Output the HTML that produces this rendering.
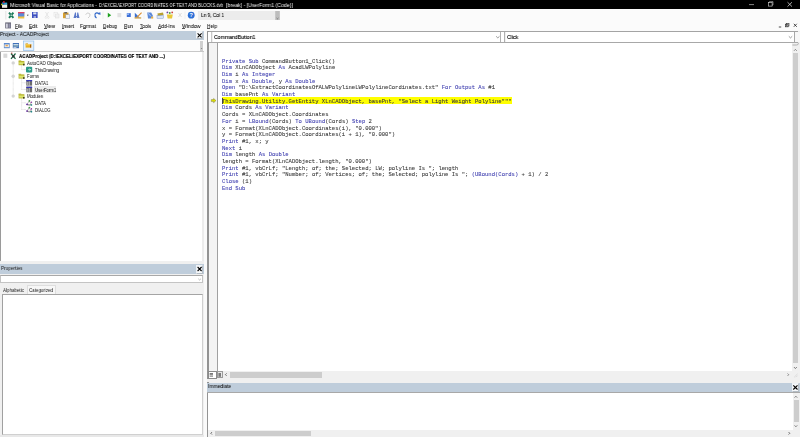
<!DOCTYPE html>
<html><head><meta charset="utf-8">
<style>
*{margin:0;padding:0;box-sizing:border-box}
html,body{width:800px;height:437px;overflow:hidden;background:#f0f0f0;position:relative;font-family:"Liberation Sans",sans-serif}
.a{position:absolute}
.t{position:absolute;white-space:pre;transform-origin:0 0;line-height:1;will-change:transform}
.cl{position:absolute;will-change:transform;left:222.2px;white-space:pre;font-family:"Liberation Mono",monospace;font-size:5.56px;-webkit-text-stroke:0.08px currentColor;line-height:6.67px;height:6.67px}
.cap{background:#bfcddb}
.xb{position:absolute;background:#f6f8fa;border:0.5px solid #eef2f6;border-right-color:#b4bcc4;border-bottom-color:#b4bcc4}
.sb{position:absolute;background:#f0f0f0}
.th{position:absolute;background:#cdcdcd}
</style></head><body>
<!-- title bar -->
<div class="a" style="left:0;top:0;width:800px;height:9.2px;background:#000"></div>
<svg class="a" style="left:0;top:0" width="800" height="10" viewBox="0 0 800 10">
  <rect x="2" y="4.3" width="5.2" height="3.5" fill="#f4f0e8"/>
  <rect x="2" y="2.6" width="5.2" height="1.9" fill="#30a8d0"/>
  <rect x="2" y="2.6" width="2.2" height="1.9" fill="#2060c0"/>
  <circle cx="3.9" cy="1.9" r="0.9" fill="#e02030"/>
  <circle cx="1.9" cy="4.4" r="0.9" fill="#b0c020"/>
  <line x1="749" y1="4.6" x2="754" y2="4.6" stroke="#ddd" stroke-width="0.6"/>
  <rect x="768.5" y="2.5" width="3.6" height="3.6" fill="none" stroke="#ddd" stroke-width="0.6"/>
  <path d="M769.5 2.5 V1.6 H773 V5 H772" fill="none" stroke="#ddd" stroke-width="0.5"/>
  <path d="M787.5 2.2 L792 6.6 M792 2.2 L787.5 6.6" stroke="#eee" stroke-width="0.7"/>
</svg>
<!-- toolbar + menu -->
<div class="a" style="left:0;top:9.2px;width:800px;height:21.8px;background:#fbfbfb"></div>
<svg class="a" style="left:0;top:9px" width="300" height="22" viewBox="0 9 300 22">
  <!-- grip -->
  <line x1="5.8" y1="11" x2="5.8" y2="19.5" stroke="#d0d0d0" stroke-width="0.6"/>
  <!-- excel icon -->
  <path d="M9 12.6 L13.4 17.8 M13.4 12.6 L9 17.8" stroke="#1a7a5a" stroke-width="1.9"/>
  <rect x="10.6" y="14.6" width="1.2" height="1.2" fill="#f8f8f8"/>
  <!-- form icon -->
  <rect x="18" y="12" width="6.3" height="6.5" fill="#f0c040"/>
  <rect x="18" y="12" width="6.3" height="4.5" fill="#5a8ad8"/>
  <rect x="18" y="12" width="6.3" height="1.3" fill="#e04060"/>
  <path d="M26.9 14.7 L28.7 14.7 L27.8 15.9Z" fill="#222"/>
  <!-- save -->
  <rect x="32" y="12" width="5.6" height="6" fill="#3d4fc0"/>
  <rect x="33.2" y="12.4" width="3.2" height="2" fill="#d8def0"/>
  <rect x="33.6" y="16" width="2.4" height="2" fill="#9aa5d8"/>
  <!-- cut grey -->
  <path d="M45.5 12 L48.5 17 M48.5 12 L45.5 17" stroke="#d8d8d8" stroke-width="0.6"/>
  <circle cx="45.8" cy="17.6" r="0.9" fill="none" stroke="#dadada" stroke-width="0.4"/>
  <circle cx="48.3" cy="17.6" r="0.9" fill="none" stroke="#dadada" stroke-width="0.4"/>
  <!-- copy grey -->
  <rect x="54" y="12.2" width="3.5" height="4" fill="none" stroke="#dcdcdc" stroke-width="0.5"/>
  <rect x="55.5" y="14" width="3.5" height="4" fill="#f0f0f0" stroke="#dcdcdc" stroke-width="0.5"/>
  <!-- paste -->
  <rect x="63" y="12.6" width="5.5" height="5.6" fill="#d8a030"/>
  <rect x="64.3" y="12" width="2.8" height="1.5" fill="#666"/>
  <rect x="65.8" y="14.8" width="4" height="3.6" fill="#eef2f8" stroke="#8098c0" stroke-width="0.4"/>
  <!-- find -->
  <path d="M73.5 18 L75 12.5 L76 12.5 L76.2 16 L77 16 L77.2 12.5 L78.2 12.5 L79.5 18 L77 18 L76.5 16.5 L76 18Z" fill="#5a78c8"/>
  <!-- undo grey -->
  <path d="M85.5 14.5 Q88 11.5 90 14 Q90.5 16.5 88 18" fill="none" stroke="#c8c8c8" stroke-width="0.9"/>
  <!-- redo -->
  <path d="M99.5 14.5 Q97 11.5 95 14 Q94.5 16.5 96.5 18" fill="none" stroke="#2f66c8" stroke-width="1.1"/>
  <path d="M98.2 13 L100.5 15 L100.3 12.3Z" fill="#2f66c8"/>
  <!-- sep -->
  <line x1="103" y1="11.5" x2="103" y2="19" stroke="#e0e0e0" stroke-width="0.5"/>
  <!-- run -->
  <path d="M107.8 12.8 L111.2 15.2 L107.8 17.6Z" fill="#1da01d"/>
  <!-- break grey -->
  <rect x="117.4" y="13" width="3.8" height="4.2" fill="#e2e2e2"/>
  <!-- reset -->
  <rect x="126.8" y="13.2" width="4" height="3.8" fill="#3c6fd8"/><rect x="127" y="13.4" width="2" height="1.6" fill="#8ab0f0"/>
  <!-- design mode -->
  <path d="M134.8 12.8 L134.8 17.6 L139.6 17.6Z" fill="#3a70d0"/>
  <rect x="134.6" y="17.4" width="6.6" height="1.1" fill="#c89020"/>
  <path d="M136.4 17 L141.2 12.2 L142 13 L137.2 17.8Z" fill="#e09030"/>
  <!-- sep -->
  <line x1="144" y1="11.5" x2="144" y2="19" stroke="#e4e4e4" stroke-width="0.5"/>
  <!-- project explorer -->
  <path d="M147.2 12.4 L151.2 12.4 L153 16 L151 18.6 L148 18.6Z" fill="#5a88d8"/>
  <path d="M148 13.2 L151 16.4" stroke="#e8f0ff" stroke-width="0.6"/>
  <rect x="151.2" y="16.6" width="2" height="2" fill="#e8b040"/>
  <!-- properties -->
  <path d="M157.4 13.6 L163 12.4 L163.6 15 L158 16.2Z" fill="#b8a030"/>
  <rect x="157" y="15.6" width="6.4" height="2.8" fill="#d8e4f4" stroke="#6a8cc8" stroke-width="0.4"/>
  <!-- object browser -->
  <path d="M166.8 14.4 L172.8 14.4 L172 18.6 L167.6 18.6Z" fill="#e8c838"/>
  <circle cx="167.4" cy="12.4" r="0.9" fill="#7040a0"/><circle cx="169.8" cy="13" r="0.9" fill="#40a040"/><circle cx="172.2" cy="12.4" r="0.9" fill="#d04040"/>
  <!-- toolbox grey -->
  <path d="M178.5 13 L181.5 17 M181.5 13 L178.5 17" stroke="#d8d8d8" stroke-width="0.8"/>
  <line x1="185" y1="11.5" x2="185" y2="19" stroke="#e0e0e0" stroke-width="0.5"/>
  <!-- help -->
  <circle cx="191.2" cy="15.2" r="3.4" fill="#2c6fd6"/>
  <text x="189.5" y="17.4" font-family="Liberation Sans" font-size="5.5" font-weight="700" fill="#fff">?</text>
  <!-- Ln Col box -->
  <rect x="198" y="11" width="82" height="9" fill="#ececec"/>
  <rect x="275.2" y="11" width="4.6" height="9" fill="#bdbdbd"/>
  <path d="M276.6 18 L277.5 18.8 L278.4 18" fill="none" stroke="#333" stroke-width="0.5"/>
  <!-- menu icon -->
  <rect x="5.2" y="22.4" width="5.8" height="6" fill="#6a6a7a"/>
  <rect x="6" y="23.6" width="1.8" height="4.2" fill="#d0d0dc"/>
  <rect x="8.5" y="23.6" width="1.9" height="4.2" fill="#9090a8"/>
</svg>
<!-- MDI child controls -->
<svg class="a" style="left:770px;top:21px" width="30" height="10" viewBox="770 21 30 10">
  <rect x="778.8" y="26.6" width="2.4" height="0.8" fill="#222"/>
  <rect x="785.5" y="24.2" width="2.6" height="2.6" fill="none" stroke="#333" stroke-width="0.7"/>
  <rect x="786.4" y="23.4" width="2.6" height="2.6" fill="none" stroke="#333" stroke-width="0.6"/>
  <path d="M793.8 23.8 L796.8 26.8 M796.8 23.8 L793.8 26.8" stroke="#222" stroke-width="0.8"/>
</svg>

<!-- ===== Project panel ===== -->
<div class="a cap" style="left:0;top:31px;width:204px;height:8.8px"></div>
<div class="xb" style="left:195.8px;top:31.3px;width:7.7px;height:8.2px"></div>
<svg class="a" style="left:195px;top:31px" width="10" height="10" viewBox="195 31 10 10"><path d="M197.6 33.4 L201.6 37.4 M201.6 33.4 L197.6 37.4" stroke="#000" stroke-width="1.1"/></svg>
<div class="a" style="left:0;top:39.8px;width:204px;height:11.7px;background:#fcfcfc"></div>
<div class="a" style="left:0;top:51.2px;width:204px;height:0.8px;background:#c8c8c8"></div>
<div class="a" style="left:200.1px;top:41px;width:3.1px;height:9.8px;background:#cfcfcf"></div><svg class="a" style="left:199px;top:46px" width="6" height="5" viewBox="199 46 6 5"><path d="M200.9 47.9 L201.65 48.8 L202.4 47.9Z" fill="#444"/></svg>
<svg class="a" style="left:0;top:39px" width="40" height="13" viewBox="0 39 40 13">
  <rect x="3.9" y="43" width="5.8" height="5.2" fill="#5a8ad0"/>
  <rect x="4.5" y="44.4" width="4.6" height="2.8" fill="#f0e8d8"/>
  <rect x="5.6" y="45" width="2.2" height="1.2" fill="#e8a050"/>
  <rect x="12.8" y="43" width="6.2" height="5.2" fill="#4070b8"/>
  <rect x="13.4" y="44" width="5" height="0.9" fill="#d8e8f0"/><rect x="13.4" y="45.5" width="5" height="0.9" fill="#c0d8c0"/><rect x="13.4" y="47" width="3" height="0.8" fill="#d8e0f0"/>
  <rect x="23.5" y="41" width="10.3" height="9.5" fill="#e4f0fc" stroke="#90bce8" stroke-width="0.7"/>
  <rect x="25.6" y="44" width="5.6" height="3.6" fill="#e8b020"/>
  <rect x="25.6" y="44" width="5.6" height="1.4" fill="#f4d060"/>
  <rect x="30" y="44.6" width="1.2" height="3" fill="#a86010"/>
  <rect x="25.6" y="43.4" width="2.4" height="0.8" fill="#d8a020"/>
</svg>
<!-- tree -->
<div class="a" style="left:0;top:52px;width:204px;height:208.6px;background:#fff"></div>
<div class="a" style="left:0.4px;top:52px;width:1px;height:208.6px;background:#9a9a9a"></div><div class="a" style="left:201.6px;top:52px;width:2px;height:208.6px;background:#ececec"></div>
<svg class="a" style="left:0;top:52px" width="60" height="62" viewBox="0 52 60 62">
  <g stroke="#b8b8b8" stroke-width="0.45" fill="none" stroke-dasharray="0.7 0.5">
    <line x1="13.2" y1="64" x2="13.2" y2="96"/>
    <line x1="21.6" y1="65" x2="21.6" y2="69.6"/><line x1="21.6" y1="69.6" x2="26" y2="69.6"/>
    <line x1="21.6" y1="78" x2="21.6" y2="89.5"/><line x1="21.6" y1="82.8" x2="26" y2="82.8"/><line x1="21.6" y1="89.5" x2="26" y2="89.5"/>
    <line x1="21.6" y1="98" x2="21.6" y2="109.5"/><line x1="21.6" y1="102.8" x2="26" y2="102.8"/><line x1="21.6" y1="109.5" x2="26" y2="109.5"/>
  </g>
  <!-- expand boxes -->
  <rect x="3.4" y="53.6" width="3.9" height="4.2" fill="#d8d8d8"/>
  <circle cx="13.2" cy="62.9" r="1.7" fill="#d4d4d4"/>
  <circle cx="13.2" cy="76.3" r="1.7" fill="#d4d4d4"/>
  <circle cx="13.2" cy="96.1" r="1.7" fill="#d4d4d4"/>
  <!-- project icon -->
  <path d="M11 53.5 L15.5 58.8 M15.5 53.5 L11 58.8" stroke="#1a6040" stroke-width="1.2"/>
  <circle cx="13.3" cy="56.2" r="1.2" fill="#333"/>
  <path d="M11 53 L12.5 53.2" stroke="#c03030" stroke-width="0.8"/>
  <!-- folders -->
  <g fill="#b8b430">
    <rect x="18.6" y="61" width="5.8" height="4.2"/><rect x="18.6" y="60.4" width="2.6" height="1"/>
    <rect x="18.6" y="74.4" width="5.8" height="4.2"/><rect x="18.6" y="73.8" width="2.6" height="1"/>
    <rect x="18.6" y="94.2" width="5.8" height="4.2"/><rect x="18.6" y="93.6" width="2.6" height="1"/>
  </g>
  <g fill="#dce870"><rect x="19.2" y="62.3" width="4.6" height="2"/><rect x="19.2" y="75.7" width="4.6" height="2"/><rect x="19.2" y="95.5" width="4.6" height="2"/></g><g fill="#404020"><rect x="23" y="63.8" width="1.6" height="1.6"/><rect x="23" y="77.2" width="1.6" height="1.6"/><rect x="23" y="97" width="1.6" height="1.6"/></g>
  <!-- ThisDrawing -->
  <rect x="26" y="66.8" width="6.2" height="5.6" rx="1" fill="#2a9a88"/>
  <path d="M28.2 69.6 L30.6 69.6 M29.6 68.6 L30.6 69.6 L29.6 70.6" stroke="#fff" stroke-width="0.6" fill="none"/>
  <!-- forms -->
  <g>
    <rect x="26.3" y="80" width="5.8" height="5.6" fill="#6a6a6a"/><rect x="26.3" y="80" width="5.8" height="1.3" fill="#3838b8"/><rect x="28.9" y="81.3" width="0.6" height="4.3" fill="#e8e8e8"/><rect x="26.8" y="82" width="1.6" height="3" fill="#a8a8a8"/>
    <rect x="26.3" y="86.7" width="5.8" height="5.6" fill="#6a6a6a"/><rect x="26.3" y="86.7" width="5.8" height="1.3" fill="#3838b8"/><rect x="28.9" y="88" width="0.6" height="4.3" fill="#e8e8e8"/><rect x="26.8" y="88.7" width="1.6" height="3" fill="#a8a8a8"/>
  </g>
  <!-- modules -->
  <g stroke="#444" stroke-width="0.4">
    <path d="M27 104.6 L29.2 100.8 L31.4 104.6 L29.2 105.4Z M27 104.6 L31.4 104.6" fill="none"/>
    <path d="M27 111.3 L29.2 107.5 L31.4 111.3 L29.2 112.1Z M27 111.3 L31.4 111.3" fill="none"/>
  </g>
  <g>
    <circle cx="29.4" cy="100.8" r="0.85" fill="#40a040"/><circle cx="27" cy="104.3" r="0.85" fill="#6020a0"/><circle cx="31.4" cy="102.2" r="0.8" fill="#9030a0"/><circle cx="31.4" cy="105" r="0.85" fill="#208888"/>
    <circle cx="29.4" cy="107.5" r="0.85" fill="#40a040"/><circle cx="27" cy="111" r="0.85" fill="#6020a0"/><circle cx="31.4" cy="108.9" r="0.8" fill="#9030a0"/><circle cx="31.4" cy="111.7" r="0.85" fill="#208888"/>
  </g>
</svg>
<div class="a" style="left:33.8px;top:86.4px;width:22.6px;height:6.2px;background:#ececec"></div>

<!-- ===== Properties panel ===== -->
<div class="a cap" style="left:0;top:264.3px;width:204px;height:9.5px"></div>
<div class="xb" style="left:195.8px;top:264.5px;width:7.7px;height:9.1px"></div>
<svg class="a" style="left:195px;top:264px" width="10" height="10" viewBox="195 264 10 10"><path d="M197.6 267 L201.6 271 M201.6 267 L197.6 271" stroke="#000" stroke-width="1.1"/></svg>
<div class="a" style="left:0;top:275.3px;width:203.3px;height:8px;background:#fff;border:0.6px solid #c4c4c4;border-top-color:#a8a8a8"></div>
<svg class="a" style="left:196px;top:276px" width="8" height="7" viewBox="196 276 8 7"><path d="M198.3 278.8 L199.6 280 L200.9 278.8" fill="none" stroke="#777" stroke-width="0.5"/></svg>
<div class="a" style="left:27px;top:285px;width:28.5px;height:9px;background:#f7f7f7;border:0.5px solid #dedede;border-bottom:none"></div>
<div class="a" style="left:1.6px;top:293.6px;width:201.4px;height:141px;background:#fff;border:1px solid #d0d0d0;border-top-color:#a4a4a4;border-left-color:#a0a0a0"></div>
<div class="a" style="left:0;top:434.5px;width:204px;height:2.5px;background:#e8e8e8"></div>

<div class="a" style="left:203.5px;top:31px;width:3.2px;height:406px;background:#fafafa"></div>
<!-- ===== Code window ===== -->
<div class="a" style="left:207px;top:31px;width:593px;height:348px;background:#f0f0f0"></div>
<div class="a" style="left:207px;top:30.6px;width:591px;height:1.4px;background:#a4a4a4"></div>
<div class="a" style="left:207px;top:31px;width:1.5px;height:406px;background:#939393"></div>
<!-- combos -->
<div class="a" style="left:207.6px;top:31.8px;width:4.9px;height:10px;background:#fff;border-right:0.5px solid #c8c8c8"></div>
<div class="a" style="left:212.5px;top:31.8px;width:288.3px;height:10px;background:#fff;border-right:0.7px solid #b0b0b0"></div>
<div class="a" style="left:501px;top:31.8px;width:4px;height:10px;background:#fff;border-right:0.7px solid #b0b0b0"></div>
<div class="a" style="left:505.6px;top:31.8px;width:289.2px;height:10px;background:#fff;border-right:0.8px solid #a8a8a8"></div><div class="a" style="left:794.8px;top:31.8px;width:5.2px;height:10px;background:#f8f8f8"></div>
<svg class="a" style="left:490px;top:32px" width="310" height="10" viewBox="490 32 310 10"><path d="M496.1 36.3 L497.8 37.9 L499.5 36.3" fill="none" stroke="#555" stroke-width="0.6"/><path d="M788.8 36.3 L790.5 37.9 L792.2 36.3" fill="none" stroke="#555" stroke-width="0.6"/></svg>
<div class="a" style="left:207.6px;top:41.5px;width:590px;height:1.3px;background:#a8a8a8"></div>
<!-- margin + code area -->
<div class="a" style="left:208.5px;top:42.6px;width:8.7px;height:328.6px;background:#f3f3f3"></div>
<div class="a" style="left:216.9px;top:42.6px;width:0.9px;height:328.6px;background:#a0a0a0"></div>
<div class="a" style="left:217.8px;top:42.6px;width:574px;height:328.6px;background:#fff"></div>
<!-- highlight -->
<div class="a" style="left:222.2px;top:97.3px;width:289.8px;height:6.67px;background:#ffff00"></div>
<svg class="a" style="left:209px;top:97px" width="8" height="8" viewBox="209 97 8 8"><path d="M211.3 99.6 L213.6 99.6 L213.6 98.4 L216 100.6 L213.6 102.8 L213.6 101.6 L211.3 101.6Z" fill="#e0e000" stroke="#505030" stroke-width="0.35"/></svg>
<div class="a" style="left:221.7px;top:97.6px;width:0.5px;height:6.2px;background:#444"></div>
<div class='cl' style='top:58.80px'><span style='color:#4040b0'>Private Sub</span><span style='color:#383838'> CommandButton1_Click()</span></div>
<div class='cl' style='top:65.47px'><span style='color:#4040b0'>Dim</span><span style='color:#383838'> XLnCADObject </span><span style='color:#4040b0'>As</span><span style='color:#383838'> AcadLWPolyline</span></div>
<div class='cl' style='top:72.14px'><span style='color:#4040b0'>Dim</span><span style='color:#383838'> i </span><span style='color:#4040b0'>As Integer</span></div>
<div class='cl' style='top:78.81px'><span style='color:#4040b0'>Dim</span><span style='color:#383838'> x </span><span style='color:#4040b0'>As Double</span><span style='color:#383838'>, y </span><span style='color:#4040b0'>As Double</span></div>
<div class='cl' style='top:85.48px'><span style='color:#4040b0'>Open</span><span style='color:#383838'> &quot;D:\ExtractCoordinatesOfALWPolylineLWPolylineCordinates.txt&quot; </span><span style='color:#4040b0'>For Output As</span><span style='color:#383838'> #1</span></div>
<div class='cl' style='top:92.15px'><span style='color:#4040b0'>Dim</span><span style='color:#383838'> basePnt </span><span style='color:#4040b0'>As Variant</span></div>
<div class='cl' style='top:98.82px'><span style='color:#383838'>ThisDrawing.Utility.GetEntity XLnCADObject, basePnt, &quot;Select a Light Weight Polyline&quot;&quot;&quot;</span></div>
<div class='cl' style='top:105.49px'><span style='color:#4040b0'>Dim</span><span style='color:#383838'> Cords </span><span style='color:#4040b0'>As Variant</span></div>
<div class='cl' style='top:112.16px'><span style='color:#383838'>Cords = XLnCADObject.Coordinates</span></div>
<div class='cl' style='top:118.83px'><span style='color:#4040b0'>For</span><span style='color:#383838'> i = </span><span style='color:#4040b0'>LBound</span><span style='color:#383838'>(Cords) </span><span style='color:#4040b0'>To UBound</span><span style='color:#383838'>(Cords) </span><span style='color:#4040b0'>Step</span><span style='color:#383838'> 2</span></div>
<div class='cl' style='top:125.50px'><span style='color:#383838'>x = Format(XLnCADObject.Coordinates(i), &quot;0.000&quot;)</span></div>
<div class='cl' style='top:132.17px'><span style='color:#383838'>y = Format(XLnCADObject.Coordinates(i + 1), &quot;0.000&quot;)</span></div>
<div class='cl' style='top:138.84px'><span style='color:#4040b0'>Print</span><span style='color:#383838'> #1, x; y</span></div>
<div class='cl' style='top:145.51px'><span style='color:#4040b0'>Next</span><span style='color:#383838'> i</span></div>
<div class='cl' style='top:152.18px'><span style='color:#4040b0'>Dim</span><span style='color:#383838'> length </span><span style='color:#4040b0'>As Double</span></div>
<div class='cl' style='top:158.85px'><span style='color:#383838'>length = Format(XLnCADObject.length, &quot;0.000&quot;)</span></div>
<div class='cl' style='top:165.52px'><span style='color:#4040b0'>Print</span><span style='color:#383838'> #1, vbCrLf; &quot;Length; of; the; Selected; LW; polyline Is &quot;; length</span></div>
<div class='cl' style='top:172.19px'><span style='color:#4040b0'>Print</span><span style='color:#383838'> #1, vbCrLf; &quot;Number; of; Vertices; of; the; Selected; polyline Is &quot;; </span><span style='color:#4040b0'>(UBound(Cords)</span><span style='color:#383838'> + 1) / 2</span></div>
<div class='cl' style='top:178.86px'><span style='color:#4040b0'>Close</span><span style='color:#383838'> (1)</span></div>
<div class='cl' style='top:185.53px'><span style='color:#4040b0'>End Sub</span></div>
<!-- v scrollbar -->
<div class="sb" style="left:791.5px;top:42.6px;width:8.5px;height:328.6px"></div>
<div class="th" style="left:792.5px;top:53px;width:5.5px;height:310px"></div>
<svg class="a" style="left:780px;top:42px" width="20" height="340" viewBox="780 42 20 340">
  <path d="M794 50.8 L795.4 49.4 L796.8 50.8" fill="none" stroke="#444" stroke-width="0.6"/>
  <path d="M796 42.1 Q798.4 42.1 798.4 43.6 Q798.4 45 796.4 45 L792.4 45" fill="none" stroke="#a8a8a8" stroke-width="0.9"/>
  <path d="M794 367.1 L795.4 368.5 L796.8 367.1" fill="none" stroke="#333" stroke-width="0.65"/>
</svg>
<!-- h scrollbar -->
<div class="sb" style="left:207.6px;top:371.2px;width:592.4px;height:7.5px"></div>
<div class="a" style="left:207.8px;top:370.8px;width:9.2px;height:7.8px;background:#fff;border:0.6px solid #8a8a8a"></div>
<div class="a" style="left:217.2px;top:371.4px;width:5.4px;height:6.8px;background:#e8e8e8;border:0.5px solid #9a9a9a"></div>
<svg class="a" style="left:207px;top:370px" width="25" height="10" viewBox="207 370 25 10">
  <rect x="209.6" y="373.2" width="3.4" height="0.6" fill="#222"/><rect x="209.6" y="374.5" width="3.4" height="0.6" fill="#222"/><rect x="209.6" y="375.8" width="3.4" height="0.6" fill="#222"/>
  <rect x="218.4" y="373" width="2.6" height="0.6" fill="#333"/><rect x="218.4" y="374.2" width="2.6" height="0.6" fill="#333"/><rect x="218.4" y="375.4" width="2.6" height="0.6" fill="#333"/><rect x="218.4" y="376.4" width="2.6" height="0.5" fill="#333"/>
  <path d="M226.6 373.4 L225.4 374.6 L226.6 375.8" fill="none" stroke="#333" stroke-width="0.7"/>
</svg>
<div class="th" style="left:229.6px;top:372.3px;width:92.4px;height:5.5px"></div>
<div class="a" style="left:207px;top:378.7px;width:593px;height:3.8px;background:#f0f0f0"></div>
<svg class="a" style="left:780px;top:370px" width="20" height="10" viewBox="780 370 20 10">
  <path d="M787.6 373.5 L788.7 374.7 L787.6 375.9" fill="none" stroke="#444" stroke-width="0.6"/>
  <path d="M797.6 373.8 L794.2 377.2 M797.6 375.6 L796 377.2" stroke="#bbb" stroke-width="0.4"/>
</svg>

<!-- ===== Immediate ===== -->
<div class="a cap" style="left:207.4px;top:382.6px;width:592.6px;height:9.2px"></div>
<div class="xb" style="left:791.8px;top:382.8px;width:7.2px;height:8.8px"></div>
<svg class="a" style="left:790px;top:382px" width="10" height="10" viewBox="790 382 10 10"><path d="M793.3 385.3 L797.5 389.5 M797.5 385.3 L793.3 389.5" stroke="#000" stroke-width="1.1"/></svg>
<div class="a" style="left:207.4px;top:391.8px;width:592.6px;height:1px;background:#a8a8a8"></div>
<div class="a" style="left:207.6px;top:392.8px;width:585px;height:36.8px;background:#fff"></div>
<div class="sb" style="left:792.6px;top:392.8px;width:7.4px;height:44.2px"></div>
<div class="th" style="left:793.6px;top:400px;width:5px;height:22.4px"></div>
<div class="sb" style="left:207.6px;top:429.6px;width:592.4px;height:7.4px"></div>
<div class="th" style="left:214.7px;top:430.6px;width:96.5px;height:5.8px"></div>
<svg class="a" style="left:207px;top:392px" width="593" height="45" viewBox="207 392 593 45">
  <path d="M794.6 397.6 L795.9 396.3 L797.2 397.6" fill="none" stroke="#333" stroke-width="0.65"/>
  <path d="M794.6 425.4 L795.9 426.7 L797.2 425.4" fill="none" stroke="#333" stroke-width="0.65"/>
  <path d="M212 432.1 L210.8 433.3 L212 434.5" fill="none" stroke="#333" stroke-width="0.7"/>
  <path d="M788.6 432.1 L789.8 433.3 L788.6 434.5" fill="none" stroke="#333" stroke-width="0.7"/>
</svg>
<div class='t' style="left:9.6px;top:2.91px;font-family:'Liberation Sans';font-size:5.3px;font-weight:400;color:#f0f0f0;transform:scaleX(0.9421);">Microsoft Visual Basic for Applications -</div>
<div class='t' style="left:98.5px;top:2.91px;font-family:'Liberation Sans';font-size:5.3px;font-weight:400;color:#f0f0f0;transform:scaleX(0.7956);">D:\EXCEL\EXPORT COORDINATES OF TEXT AND BLOCKS.dvb</div>
<div class='t' style="left:225.8px;top:2.91px;font-family:'Liberation Sans';font-size:5.3px;font-weight:400;color:#f0f0f0;transform:scaleX(0.9853);">[break] - [UserForm1 (Code)]</div>
<div class='t' style="left:15px;top:22.81px;font-family:'Liberation Sans';font-size:6.1px;font-weight:400;color:#111;transform:scaleX(0.7631);-webkit-text-stroke:0.06px #111;">File</div>
<div class='t' style="left:29px;top:22.81px;font-family:'Liberation Sans';font-size:6.1px;font-weight:400;color:#111;transform:scaleX(0.8083);-webkit-text-stroke:0.06px #111;">Edit</div>
<div class='t' style="left:44px;top:22.81px;font-family:'Liberation Sans';font-size:6.1px;font-weight:400;color:#111;transform:scaleX(0.8391);-webkit-text-stroke:0.06px #111;">View</div>
<div class='t' style="left:61.5px;top:22.81px;font-family:'Liberation Sans';font-size:6.1px;font-weight:400;color:#111;transform:scaleX(0.7869);-webkit-text-stroke:0.06px #111;">Insert</div>
<div class='t' style="left:80px;top:22.81px;font-family:'Liberation Sans';font-size:6.1px;font-weight:400;color:#111;transform:scaleX(0.8285);-webkit-text-stroke:0.06px #111;">Format</div>
<div class='t' style="left:103px;top:22.81px;font-family:'Liberation Sans';font-size:6.1px;font-weight:400;color:#111;transform:scaleX(0.7791);-webkit-text-stroke:0.06px #111;">Debug</div>
<div class='t' style="left:124px;top:22.81px;font-family:'Liberation Sans';font-size:6.1px;font-weight:400;color:#111;transform:scaleX(0.8045);-webkit-text-stroke:0.06px #111;">Run</div>
<div class='t' style="left:140px;top:22.81px;font-family:'Liberation Sans';font-size:6.1px;font-weight:400;color:#111;transform:scaleX(0.7728);-webkit-text-stroke:0.06px #111;">Tools</div>
<div class='t' style="left:158px;top:22.81px;font-family:'Liberation Sans';font-size:6.1px;font-weight:400;color:#111;transform:scaleX(0.8089);-webkit-text-stroke:0.06px #111;">Add-Ins</div>
<div class='t' style="left:182px;top:22.81px;font-family:'Liberation Sans';font-size:6.1px;font-weight:400;color:#111;transform:scaleX(0.8530);-webkit-text-stroke:0.06px #111;">Window</div>
<div class='t' style="left:207px;top:22.81px;font-family:'Liberation Sans';font-size:6.1px;font-weight:400;color:#111;transform:scaleX(0.7970);-webkit-text-stroke:0.06px #111;">Help</div>
<div class='t' style="left:200.5px;top:12.19px;font-family:'Liberation Sans';font-size:6.2px;font-weight:400;color:#000;transform:scaleX(0.7683);-webkit-text-stroke:0.08px #000;">Ln 9, Col 1</div>
<div class='t' style="left:0.4px;top:30.82px;font-family:'Liberation Sans';font-size:6.0px;font-weight:400;color:#000;transform:scaleX(0.8301);">Project - ACADProject</div>
<div class='t' style="left:0.6px;top:265.22px;font-family:'Liberation Sans';font-size:6.0px;font-weight:400;color:#1a1a1a;transform:scaleX(0.7858);">Properties</div>
<div class='t' style="left:3px;top:286.62px;font-family:'Liberation Sans';font-size:6.0px;font-weight:400;color:#222;transform:scaleX(0.7492);">Alphabetic</div>
<div class='t' style="left:29px;top:286.62px;font-family:'Liberation Sans';font-size:6.0px;font-weight:400;color:#222;transform:scaleX(0.7417);">Categorized</div>
<div class='t' style="left:213.5px;top:33.62px;font-family:'Liberation Sans';font-size:6.0px;font-weight:400;color:#000;transform:scaleX(0.8579);-webkit-text-stroke:0.12px #000;">CommandButton1</div>
<div class='t' style="left:506.7px;top:33.62px;font-family:'Liberation Sans';font-size:6.0px;font-weight:400;color:#000;transform:scaleX(0.8692);-webkit-text-stroke:0.12px #000;">Click</div>
<div class='t' style="left:208.0px;top:383.12px;font-family:'Liberation Sans';font-size:6.0px;font-weight:400;color:#111;transform:scaleX(0.8210);-webkit-text-stroke:0.04px #111;">Immediate</div>
<div class='t' style="left:19px;top:53.22px;font-family:'Liberation Sans';font-size:6.0px;font-weight:700;color:#000;transform:scaleX(0.7630);-webkit-text-stroke:0.2px #000;">ACADProject (D:\EXCEL\EXPORT COORDINATES OF TEXT AND ...)</div>
<div class='t' style="left:26.5px;top:59.92px;font-family:'Liberation Sans';font-size:6.0px;font-weight:400;color:#222;transform:scaleX(0.7463);-webkit-text-stroke:0.03px #222;">AutoCAD Objects</div>
<div class='t' style="left:34.6px;top:66.62px;font-family:'Liberation Sans';font-size:6.0px;font-weight:400;color:#222;transform:scaleX(0.7198);-webkit-text-stroke:0.03px #222;">ThisDrawing</div>
<div class='t' style="left:26.5px;top:73.32px;font-family:'Liberation Sans';font-size:6.0px;font-weight:400;color:#222;transform:scaleX(0.7059);-webkit-text-stroke:0.03px #222;">Forms</div>
<div class='t' style="left:34.5px;top:79.92px;font-family:'Liberation Sans';font-size:6.0px;font-weight:400;color:#222;transform:scaleX(0.7316);-webkit-text-stroke:0.03px #222;">DATA1</div>
<div class='t' style="left:34.5px;top:86.52px;font-family:'Liberation Sans';font-size:6.0px;font-weight:400;color:#222;transform:scaleX(0.7063);-webkit-text-stroke:0.03px #222;">UserForm1</div>
<div class='t' style="left:26.5px;top:93.12px;font-family:'Liberation Sans';font-size:6.0px;font-weight:400;color:#222;transform:scaleX(0.7052);-webkit-text-stroke:0.03px #222;">Modules</div>
<div class='t' style="left:34.5px;top:99.82px;font-family:'Liberation Sans';font-size:6.0px;font-weight:400;color:#222;transform:scaleX(0.7273);-webkit-text-stroke:0.03px #222;">DATA</div>
<div class='t' style="left:34.5px;top:106.52px;font-family:'Liberation Sans';font-size:6.0px;font-weight:400;color:#222;transform:scaleX(0.6832);-webkit-text-stroke:0.03px #222;">DIALOG</div>
<div class='a' style='left:15px;top:28.2px;width:2.8px;height:0.5px;background:#555'></div>
<div class='a' style='left:29px;top:28.2px;width:2.8px;height:0.5px;background:#555'></div>
<div class='a' style='left:44px;top:28.2px;width:2.8px;height:0.5px;background:#555'></div>
<div class='a' style='left:61.5px;top:28.2px;width:2.8px;height:0.5px;background:#555'></div>
<div class='a' style='left:83.0px;top:28.2px;width:2.8px;height:0.5px;background:#555'></div>
<div class='a' style='left:103px;top:28.2px;width:2.8px;height:0.5px;background:#555'></div>
<div class='a' style='left:124px;top:28.2px;width:2.8px;height:0.5px;background:#555'></div>
<div class='a' style='left:140px;top:28.2px;width:2.8px;height:0.5px;background:#555'></div>
<div class='a' style='left:158px;top:28.2px;width:2.8px;height:0.5px;background:#555'></div>
<div class='a' style='left:182px;top:28.2px;width:2.8px;height:0.5px;background:#555'></div>
<div class='a' style='left:207px;top:28.2px;width:2.8px;height:0.5px;background:#555'></div>
</body></html>
